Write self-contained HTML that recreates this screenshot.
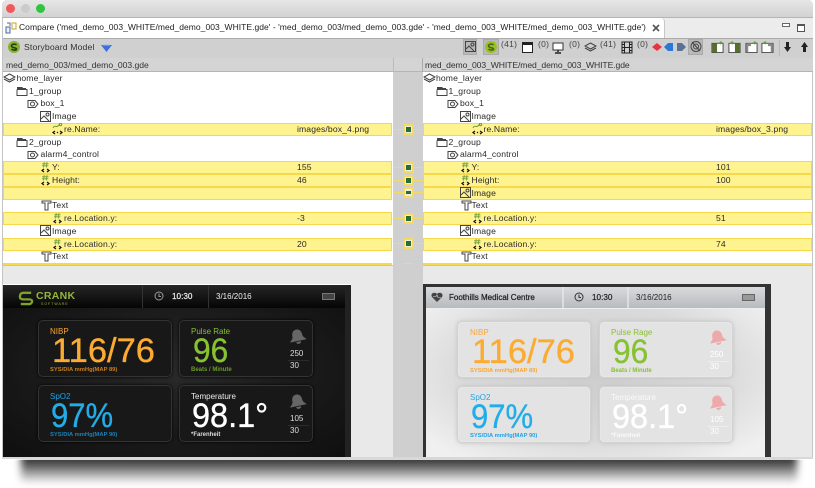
<!DOCTYPE html>
<html><head><meta charset="utf-8"><style>
html,body{margin:0;padding:0;background:#fff}
#p{position:relative;width:815px;height:488px;overflow:hidden;background:#fff;font-family:"Liberation Sans",sans-serif;color:#222;filter:blur(.35px)}
#p div,#p svg{position:absolute}
.t{font-size:8.6px;line-height:13px;height:13px;white-space:nowrap;color:#2a2a2a;letter-spacing:.12px}
.y{height:11px;background:#fff38f;border:1px solid #f5d94a;box-sizing:content-box}
.b{width:7px;height:7px;background:#e8f0e0;border:2px solid #f3d968}
.b i{position:absolute;left:1px;top:1px;width:5px;height:5px;background:#2d6b35;display:block}
.l{width:10px;height:1px;background:#f3d968}
.c{font-size:8.500px;color:#444;white-space:nowrap;line-height:10px;letter-spacing:.3px}
.s{fill:none;stroke:#444;stroke-width:1}
.d{white-space:nowrap}
.n{-webkit-text-stroke:.35px currentColor;transform-origin:0 0}
.cd{width:132px;height:55px;border-radius:5px}
.dk{background:#181818;border:1px solid #333;box-shadow:0 0 3px #000}
.lt{background:#e3e3e3;border:1px solid #d2d2d2;box-shadow:0 0 4px #c4c4c4,inset 0 0 1px #fff}
.bl{transform:rotate(-12deg)}
</style></head><body><div id="p">
<svg width="0" height="0" style="position:absolute"><defs>
<symbol id="lay" viewBox="0 0 13 11"><path class="s" d="M6.500 1L12 4 6.500 7 1 4zM1 6l5.500 3L12 6"/></symbol>
<symbol id="fol" viewBox="0 0 12 11"><path class="s" d="M1 3.500V9.500H11V3.500H1M1.500 3V1.500H6L7 3"/><path d="M1 2h9v1.500H1z" fill="#444"/></symbol>
<symbol id="ctl" viewBox="0 0 12 10"><path class="s" d="M1 1.500H8L11 5 8 8.500H1z"/><circle class="s" cx="5.500" cy="5" r="2"/></symbol>
<symbol id="img" viewBox="0 0 11 11"><path class="s" d="M.500.500h10v10H.500z"/><path class="s" d="M1 8l3-3 5 5"/><circle class="s" cx="7.500" cy="3.500" r="1.500"/></symbol>
<symbol id="txt" viewBox="0 0 11 11"><path class="s" d="M1 3V1H10V3H7V10H4V3z"/></symbol>
<symbol id="at1" viewBox="0 0 11 12"><path d="M1 5C3 1 4 5 6 3L8 1" fill="none" stroke="#6a9a3a"/><circle cx="8.500" cy="1.500" r="1.200" fill="none" stroke="#6a9a3a"/><path d="M3 8L1 9.500 3 11M8 8l2 1.500L8 11" fill="none" stroke="#111" stroke-width="1.200"/><circle cx="5.500" cy="9.500" r=".7" fill="#111"/></symbol>
<symbol id="at2" viewBox="0 0 9 12"><path d="M3.200 1L2.500 6.500M6 1L5.300 6.500M1.200 2.800H7.500M1 4.800H7.300" fill="none" stroke="#6a9a3a" stroke-width=".8"/><path d="M3 8L1 9.500 3 11M6 8l2 1.500L6 11" fill="none" stroke="#111" stroke-width="1.200"/></symbol>
<symbol id="bell" viewBox="0 0 17 15"><path d="M8.500 0.500C4.500 0.500 3.500 4 3.500 6.500 3.500 9 1.500 10 0 12H17C15.500 10 13.500 9 13.500 6.500 13.500 4 12.500 0.500 8.500 0.500z"/><path d="M6 12.800a2.500 2.200 0 0 0 5 0z"/></symbol>
<symbol id="tb1" viewBox="0 0 14 14"><path d="M1 3h12v10H1z" fill="#fff" stroke="#444"/><path d="M1.500 3h5v10h-5z" fill="#56702c"/><path d="M8 2.500h3.500M10 1l2 1.500-2 1.500" fill="none" stroke="#5e9a3a"/></symbol>
<symbol id="tb2" viewBox="0 0 14 14"><path d="M1 3h12v10H1z" fill="#fff" stroke="#444"/><path d="M7.500 3h5v10h-5z" fill="#56702c"/><path d="M3 2.500h3.500M5 1l-2 1.500 2 1.500" fill="none" stroke="#5e9a3a"/></symbol>
<symbol id="tb3" viewBox="0 0 14 14"><path d="M1 3h12v10H1z" fill="#fff" stroke="#444"/><path d="M1.500 3h2v10h-2zM1.500 3h5v3h-5z" fill="#8a8a8a"/><path d="M8 2.500h3.500M10 1l2 1.500-2 1.500" fill="none" stroke="#5e9a3a"/></symbol>
<symbol id="tb4" viewBox="0 0 14 14"><path d="M1 3h12v10H1z" fill="#fff" stroke="#444"/><path d="M10.500 3h2v10h-2zM7.500 3h5v3h-5z" fill="#8a8a8a"/><path d="M3 2.500h3.500M5 1l-2 1.500 2 1.500" fill="none" stroke="#5e9a3a"/></symbol>
</defs></svg>

<!-- shadow -->
<div style="left:21px;top:452px;width:776px;height:32px;background:linear-gradient(#333 0,#333 25%,#888 56%,#ccc 81%,rgba(255,255,255,0) 100%);filter:blur(4px)"></div>
<div style="left:2px;top:0;width:811px;height:458px;background:#e9e9e9;border:1px solid #c4c4c4;box-sizing:border-box;border-radius:5px 5px 0 0"></div>
<div style="left:0;top:459px;width:815px;height:1px;background:#fff;opacity:.8"></div>
<!-- title bar -->
<div style="left:2px;top:0;width:811px;height:17px;background:linear-gradient(#e6e6e6,#d2d2d2);border-bottom:1px solid #b4b4b4;border-radius:5px 5px 0 0"></div>
<div style="left:6px;top:4px;width:9px;height:9px;border-radius:50%;background:#f0585a"></div>
<div style="left:21px;top:4px;width:9px;height:9px;border-radius:50%;background:#cbcbcb"></div>
<div style="left:36px;top:4px;width:9px;height:9px;border-radius:50%;background:#2fc53f"></div>
<!-- tab row -->
<div style="left:3px;top:18px;width:810px;height:20px;background:#ececec"></div>
<div style="left:3px;top:18px;width:661px;height:20px;background:#fff;border-right:1px solid #c6c6c6;border-radius:0 4px 0 0"></div>
<svg style="left:5px;top:22px" width="12" height="12" viewBox="0 0 12 12"><path d="M1 5h4v6H1z" fill="#eef" stroke="#4a6a9a"/><path d="M2 1h3v3" fill="none" stroke="#4a6a9a"/><path d="M7 1h4v6H7z" fill="#fff" stroke="#c9a520"/></svg>
<div class="t" style="left:19px;top:21px;font-size:8.500px;letter-spacing:.04px;color:#222">Compare ('med_demo_003_WHITE/med_demo_003_WHITE.gde' - 'med_demo_003/med_demo_003.gde' - 'med_demo_003_WHITE/med_demo_003_WHITE.gde')</div>
<svg style="left:652px;top:24px" width="8" height="8" viewBox="0 0 8 8"><path d="M1 1l6 6M7 1L1 7" stroke="#555" stroke-width="1.600" fill="none"/></svg>
<div style="left:782px;top:23px;width:6px;height:2px;border:1px solid #666;background:#fff"></div>
<div style="left:797px;top:24px;width:6px;height:5px;border:1px solid #555;border-top-width:2px;background:#fff"></div>
<!-- toolbar -->
<div style="left:3px;top:38px;width:810px;height:20px;background:#d0d0d0;border-top:1px solid #aaa;box-sizing:border-box"></div>
<svg style="left:8px;top:41px" width="12" height="12" viewBox="0 0 12 12"><circle cx="6" cy="6" r="6" fill="#8ab02c"/><path d="M8.500 4C7 2.500 3.500 3 3.500 5S8.500 6.500 8.500 8 5 9.500 3.500 8" fill="none" stroke="#1f3b14" stroke-width="1.500"/></svg>
<div class="t" style="left:24px;top:41px;font-size:8.700px;color:#333">Storyboard Model</div>
<svg style="left:101px;top:44px" width="11" height="8" viewBox="0 0 11 8"><path d="M0 1h11L5.500 8z" fill="#3f6fd8"/><path d="M2 1h7" stroke="#9db8ee"/></svg>

<div style="left:463px;top:39px;width:14px;height:16px;background:#b9b9b9;border:1px solid #aaa;box-sizing:border-box"></div>
<svg style="left:465px;top:41px" width="11" height="11"><use href="#img"/></svg>
<div style="left:483px;top:39px;width:16px;height:16px;background:#b9b9b9;border:1px solid #aaa;box-sizing:border-box"></div>
<svg style="left:485px;top:41px" width="12" height="12" viewBox="0 0 12 12"><circle cx="6" cy="6" r="6" fill="#97c11f"/><path d="M8.500 4C7 2.500 3.500 3 3.500 5S8.500 6.500 8.500 8 5 9.500 3.500 8" fill="none" stroke="#47621a" stroke-width="1.500"/></svg>
<div class="c" style="left:501px;top:39px">(41)</div>
<svg style="left:522px;top:42px" width="11" height="11" viewBox="0 0 11 11"><path d="M.500.500h10v10H.500z" fill="#fff" stroke="#222"/><path d="M1 1h9v2H1z" fill="#222"/></svg>
<div class="c" style="left:538px;top:39px">(0)</div>
<svg style="left:552px;top:42px" width="12" height="12" viewBox="0 0 12 12"><path d="M1 1h10v7H1z" fill="#fff" stroke="#333"/><path d="M6 8v2M3 11h6" stroke="#222" stroke-width="1.500"/></svg>
<div class="c" style="left:569px;top:39px">(0)</div>
<svg style="left:584px;top:42px" width="13" height="11"><use href="#lay"/></svg>
<div class="c" style="left:600px;top:39px">(41)</div>
<svg style="left:621px;top:41px" width="12" height="13" viewBox="0 0 12 13"><path d="M1 1h10v11H1zM3.500 1v11M8.500 1v11M1 6.500h10M1 3.500h2.500M1 9.500h2.500M8.500 3.500H11M8.500 9.500H11" fill="none" stroke="#222"/></svg>
<div class="c" style="left:637px;top:39px">(0)</div>
<svg style="left:652px;top:43px" width="10" height="8" viewBox="0 0 10 8"><path d="M0 4L5 0l5 4-5 4z" fill="#ea3340"/></svg>
<svg style="left:664px;top:43px" width="9" height="8" viewBox="0 0 9 8"><path d="M0 4L4 0h5v8H4z" fill="#2a78d8"/></svg>
<svg style="left:677px;top:43px" width="9" height="8" viewBox="0 0 9 8"><path d="M9 4L5 0H0v8h5z" fill="#5b7294"/></svg>
<div style="left:688px;top:39px;width:15px;height:16px;background:#b9b9b9;border:1px solid #aaa;box-sizing:border-box"></div>
<svg style="left:690px;top:40px" width="12" height="13" viewBox="0 0 12 13"><circle class="s" cx="6" cy="6.500" r="5"/><circle class="s" cx="6" cy="6.500" r="2.500"/><path class="s" d="M2 2l8 9"/></svg>
<svg style="left:711px;top:40px" width="13" height="14"><use href="#tb1"/></svg>
<svg style="left:728px;top:40px" width="13" height="14"><use href="#tb2"/></svg>
<svg style="left:745px;top:40px" width="13" height="14"><use href="#tb3"/></svg>
<svg style="left:761px;top:40px" width="13" height="14"><use href="#tb4"/></svg>
<div style="left:779px;top:40px;width:1px;height:16px;background:#bbb"></div>
<svg style="left:784px;top:42px" width="7" height="10" viewBox="0 0 7 10"><path d="M2 0h3v5h2L3.500 10 0 5h2z" fill="#222"/></svg>
<svg style="left:801px;top:42px" width="7" height="10" viewBox="0 0 7 10"><path d="M2 10h3V5h2L3.500 0 0 5h2z" fill="#222"/></svg>

<!-- headers -->
<div style="left:3px;top:58px;width:810px;height:14px;background:#d4d4d4;border-bottom:1px solid #b5b5b5;box-sizing:border-box"></div>
<div style="left:393px;top:58px;width:1px;height:14px;background:#bbb"></div>
<div style="left:422px;top:58px;width:1px;height:14px;background:#aaa"></div>
<div class="t" style="left:6px;top:59px;color:#333;letter-spacing:-.02px">med_demo_003/med_demo_003.gde</div>
<div class="t" style="left:425px;top:59px;color:#333;letter-spacing:-.09px">med_demo_003_WHITE/med_demo_003_WHITE.gde</div>

<!-- panes -->
<div style="left:3px;top:72px;width:390px;height:193px;background:#fff"></div>
<div style="left:423px;top:72px;width:389px;height:193px;background:#fff"></div>
<div style="left:393px;top:72px;width:30px;height:386px;background:#cfcfcf"></div>
<div style="left:3px;top:265px;width:390px;height:1px;background:#c4c4c4"></div>
<div style="left:423px;top:265px;width:389px;height:1px;background:#c4c4c4"></div>

<!-- yellow rows -->
<div class="y" style="left:3px;top:123px;width:387px"></div>
<div class="y" style="left:3px;top:161px;width:387px"></div>
<div class="y" style="left:3px;top:174px;width:387px"></div>
<div class="y" style="left:3px;top:186.500px;width:387px"></div>
<div class="y" style="left:3px;top:212px;width:387px"></div>
<div class="y" style="left:3px;top:237.500px;width:387px"></div>
<div style="left:3px;top:263px;width:389px;height:2px;background:#f5d94a"></div>
<div class="y" style="left:423px;top:123px;width:387px"></div>
<div class="y" style="left:423px;top:161px;width:387px"></div>
<div class="y" style="left:423px;top:174px;width:387px"></div>
<div class="y" style="left:423px;top:186.500px;width:387px"></div>
<div class="y" style="left:423px;top:212px;width:387px"></div>
<div class="y" style="left:423px;top:237.500px;width:387px"></div>
<div style="left:423px;top:263px;width:389px;height:2px;background:#f5d94a"></div>

<!-- connectors -->
<div class="l" style="left:393px;top:129px;width:30px"></div><div class="b" style="left:403px;top:124px"><i></i></div>
<div class="l" style="left:393px;top:167px;width:30px"></div><div class="b" style="left:403px;top:162px"><i></i></div>
<div class="l" style="left:393px;top:180px;width:30px"></div><div class="b" style="left:403px;top:175px"><i></i></div>
<div class="l" style="left:393px;top:192px;width:30px"></div><div class="b" style="left:403px;top:187px"><i style="top:2px;height:3px"></i></div>
<div class="l" style="left:393px;top:218px;width:30px"></div><div class="b" style="left:403px;top:213px"><i></i></div>
<div class="l" style="left:393px;top:243px;width:30px"></div><div class="b" style="left:403px;top:238px"><i></i></div>
<div class="l" style="left:403px;top:263px"></div>

<!-- left tree -->
<svg style="left:3px;top:73px" width="13" height="11"><use href="#lay"/></svg><div class="t" style="left:16.500px;top:72px">home_layer</div>
<svg style="left:16px;top:86px" width="12" height="11"><use href="#fol"/></svg><div class="t" style="left:29px;top:85px">1_group</div>
<svg style="left:27px;top:99px" width="12" height="10"><use href="#ctl"/></svg><div class="t" style="left:40.500px;top:97px">box_1</div>
<svg style="left:40px;top:111px" width="11" height="11"><use href="#img"/></svg><div class="t" style="left:52px;top:110px">Image</div>
<svg style="left:52px;top:123px" width="11" height="12"><use href="#at1"/></svg><div class="t" style="left:64px;top:123px">re.Name:</div><div class="t" style="left:297px;top:123px">images/box_4.png</div>
<svg style="left:16px;top:137px" width="12" height="11"><use href="#fol"/></svg><div class="t" style="left:29px;top:136px">2_group</div>
<svg style="left:27px;top:150px" width="12" height="10"><use href="#ctl"/></svg><div class="t" style="left:40.500px;top:148px">alarm4_control</div>
<svg style="left:41px;top:161px" width="9" height="12"><use href="#at2"/></svg><div class="t" style="left:52px;top:161px">Y:</div><div class="t" style="left:297px;top:161px">155</div>
<svg style="left:41px;top:174px" width="9" height="12"><use href="#at2"/></svg><div class="t" style="left:52px;top:174px">Height:</div><div class="t" style="left:297px;top:174px">46</div>
<svg style="left:41px;top:200px" width="11" height="11"><use href="#txt"/></svg><div class="t" style="left:52px;top:199px">Text</div>
<svg style="left:53px;top:212px" width="9" height="12"><use href="#at2"/></svg><div class="t" style="left:64px;top:212px">re.Location.y:</div><div class="t" style="left:297px;top:212px">-3</div>
<svg style="left:40px;top:225px" width="11" height="11"><use href="#img"/></svg><div class="t" style="left:52px;top:224.500px">Image</div>
<svg style="left:53px;top:238px" width="9" height="12"><use href="#at2"/></svg><div class="t" style="left:64px;top:237.500px">re.Location.y:</div><div class="t" style="left:297px;top:237.500px">20</div>
<svg style="left:41px;top:251px" width="11" height="11"><use href="#txt"/></svg><div class="t" style="left:52px;top:250px">Text</div>

<!-- right tree -->
<svg style="left:422.500px;top:73px" width="13" height="11"><use href="#lay"/></svg><div class="t" style="left:436px;top:72px">home_layer</div>
<svg style="left:435.500px;top:86px" width="12" height="11"><use href="#fol"/></svg><div class="t" style="left:448.500px;top:85px">1_group</div>
<svg style="left:446.500px;top:99px" width="12" height="10"><use href="#ctl"/></svg><div class="t" style="left:460px;top:97px">box_1</div>
<svg style="left:459.500px;top:111px" width="11" height="11"><use href="#img"/></svg><div class="t" style="left:471.500px;top:110px">Image</div>
<svg style="left:471.500px;top:123px" width="11" height="12"><use href="#at1"/></svg><div class="t" style="left:483.500px;top:123px">re.Name:</div><div class="t" style="left:716px;top:123px">images/box_3.png</div>
<svg style="left:435.500px;top:137px" width="12" height="11"><use href="#fol"/></svg><div class="t" style="left:448.500px;top:136px">2_group</div>
<svg style="left:446.500px;top:150px" width="12" height="10"><use href="#ctl"/></svg><div class="t" style="left:460px;top:148px">alarm4_control</div>
<svg style="left:460.500px;top:161px" width="9" height="12"><use href="#at2"/></svg><div class="t" style="left:471.500px;top:161px">Y:</div><div class="t" style="left:716px;top:161px">101</div>
<svg style="left:460.500px;top:174px" width="9" height="12"><use href="#at2"/></svg><div class="t" style="left:471.500px;top:174px">Height:</div><div class="t" style="left:716px;top:174px">100</div>
<svg style="left:459.500px;top:187px" width="11" height="11"><use href="#img"/></svg><div class="t" style="left:471.500px;top:186.500px">Image</div>
<svg style="left:460.500px;top:200px" width="11" height="11"><use href="#txt"/></svg><div class="t" style="left:471.500px;top:199px">Text</div>
<svg style="left:472.500px;top:212px" width="9" height="12"><use href="#at2"/></svg><div class="t" style="left:483.500px;top:212px">re.Location.y:</div><div class="t" style="left:716px;top:212px">51</div>
<svg style="left:459.500px;top:225px" width="11" height="11"><use href="#img"/></svg><div class="t" style="left:471.500px;top:224.500px">Image</div>
<svg style="left:472.500px;top:238px" width="9" height="12"><use href="#at2"/></svg><div class="t" style="left:483.500px;top:237.500px">re.Location.y:</div><div class="t" style="left:716px;top:237.500px">74</div>
<svg style="left:460.500px;top:251px" width="11" height="11"><use href="#txt"/></svg><div class="t" style="left:471.500px;top:250px">Text</div>

<!-- left dashboard -->
<div style="left:3px;top:284px;width:348px;height:174px;background:radial-gradient(ellipse at center,#2a2a2a 0,#1a1a1a 55%,#0e0e0e 100%);overflow:hidden"></div>
<div style="left:3px;top:284px;width:348px;height:1px;background:#fff"></div>
<div style="left:3px;top:285px;width:342px;height:23px;background:linear-gradient(#262626,#050505)"></div>
<div style="left:142px;top:285px;width:1px;height:23px;background:#333"></div>
<div style="left:208px;top:285px;width:1px;height:23px;background:#333"></div>
<div style="left:345px;top:285px;width:6px;height:173px;background:#222"></div>
<svg style="left:18px;top:289px" width="16" height="17" viewBox="0 0 17 18"><path d="M14 4H6C3 4 2 6 2 8s1 3 4 3h6c2 0 3 1 3 2s-1 3-3 3H3" fill="none" stroke="#7fa22c" stroke-width="2.500"/></svg>
<div class="d" style="left:36px;top:290px;font-size:10.500px;line-height:12px;font-weight:bold;color:#93b53a;letter-spacing:.3px">CRANK</div>
<div class="d" style="left:41px;top:302px;font-size:3.500px;line-height:4px;color:#93b53a;letter-spacing:1px">SOFTWARE</div>
<svg style="left:154px;top:291px" width="10" height="10" viewBox="0 0 10 10"><circle cx="5" cy="5" r="4" fill="none" stroke="#999"/><path d="M5 2.500V5.500H7" fill="none" stroke="#999"/></svg>
<div class="d n" style="left:172px;top:291px;font-size:8.200px;line-height:11px;color:#eee;-webkit-text-stroke-width:.2px">10:30</div>
<div class="d" style="left:216px;top:291px;font-size:8px;line-height:11px;color:#eee">3/16/2016</div>
<div style="left:322px;top:293px;width:11px;height:5px;border:1px solid #777;background:#444"></div>

<div class="cd dk" style="left:38px;top:320px"></div>
<div class="cd dk" style="left:179px;top:320px"></div>
<div class="cd dk" style="left:38px;top:385px"></div>
<div class="cd dk" style="left:179px;top:385px"></div>

<div class="d" style="left:50px;top:326px;font-size:8px;line-height:11px;color:#f9a634">NIBP</div>
<div class="d n" style="left:52px;top:331px;font-size:34.500px;line-height:40px;color:#fbab32">116/76</div>
<div class="d" style="left:50px;top:366px;font-size:5.800px;line-height:9px;color:#c97f20;font-weight:bold">SYS/DIA mmHg(MAP 89)</div>
<div class="d" style="left:191px;top:326px;font-size:8px;line-height:11px;color:#88c034">Pulse Rate</div>
<div class="d n" style="left:193px;top:331px;font-size:34.500px;line-height:40px;color:#86c232;transform:scaleX(.92)">96</div>
<div class="d" style="left:191px;top:366px;font-size:6px;line-height:9px;color:#6c9a28;font-weight:bold">Beats / Minute</div>
<svg class="bl" style="left:289px;top:329px;fill:#666" width="17" height="15"><use href="#bell"/></svg>
<div class="d" style="left:290px;top:349px;font-size:8px;line-height:10px;color:#ddd">250</div>
<div style="left:288px;top:360px;width:21px;height:1px;background:#2c2c2c"></div>
<div class="d" style="left:290px;top:361px;font-size:8px;line-height:10px;color:#ddd">30</div>

<div class="d" style="left:50px;top:391px;font-size:8px;line-height:11px;color:#23a3e3">SpO2</div>
<div class="d n" style="left:51px;top:396px;font-size:34.500px;line-height:40px;color:#22ade9;transform:scaleX(.9)">97%</div>
<div class="d" style="left:50px;top:431px;font-size:5.800px;line-height:9px;color:#1b82b8;font-weight:bold">SYS/DIA mmHg(MAP 90)</div>
<div class="d" style="left:191px;top:391px;font-size:8px;line-height:11px;color:#eee">Temperature</div>
<div class="d n" style="left:192px;top:396px;font-size:34.500px;line-height:40px;color:#fff;transform:scaleX(.94)">98.1°</div>
<div class="d" style="left:191px;top:431px;font-size:6px;line-height:9px;color:#ddd;font-weight:bold">*Farenheit</div>
<svg class="bl" style="left:289px;top:394px;fill:#666" width="17" height="15"><use href="#bell"/></svg>
<div class="d" style="left:290px;top:414px;font-size:8px;line-height:10px;color:#ddd">105</div>
<div style="left:288px;top:425px;width:21px;height:1px;background:#2c2c2c"></div>
<div class="d" style="left:290px;top:426px;font-size:8px;line-height:10px;color:#ddd">30</div>

<!-- right dashboard -->
<div style="left:423px;top:284px;width:348px;height:174px;background:#333"></div>
<div style="left:426px;top:287px;width:339px;height:171px;background:radial-gradient(ellipse at center,#cdcdcd 0,#dadada 55%,#f0f0f0 90%)"></div>
<div style="left:426px;top:287px;width:136px;height:21px;background:linear-gradient(#d8dadc,#b8bbbe)"></div>
<div style="left:564px;top:287px;width:63px;height:21px;background:linear-gradient(#d8dadc,#b8bbbe)"></div>
<div style="left:629px;top:287px;width:136px;height:21px;background:linear-gradient(#d8dadc,#b8bbbe)"></div>
<div style="left:426px;top:308px;width:339px;height:1px;background:#eee"></div>
<svg style="left:431px;top:292px" width="12" height="10" viewBox="0 0 12 10"><path d="M6 10L1 5C-1 2 3-1 6 2c3-3 7 0 5 3z" fill="#444"/><path d="M2 4.500h3l1-1.500 1 2.500h3" stroke="#ddd" stroke-width=".6" fill="none"/></svg>
<div class="d n" style="left:449px;top:292px;font-size:8px;line-height:12px;color:#222;-webkit-text-stroke-width:.25px">Foothills Medical Centre</div>
<svg style="left:574px;top:292px" width="10" height="10" viewBox="0 0 10 10"><circle cx="5" cy="5" r="4" fill="none" stroke="#333"/><path d="M5 2.500V5.500H7" fill="none" stroke="#333"/></svg>
<div class="d n" style="left:592px;top:292px;font-size:8.200px;line-height:11px;color:#222;-webkit-text-stroke-width:.2px">10:30</div>
<div class="d" style="left:636px;top:292px;font-size:8px;line-height:11px;color:#222">3/16/2016</div>
<div style="left:742px;top:293.500px;width:11px;height:5px;border:1px solid #666;background:#999"></div>

<div class="cd lt" style="left:457px;top:321px"></div>
<div class="cd lt" style="left:599px;top:321px"></div>
<div class="cd lt" style="left:457px;top:386px"></div>
<div class="cd lt" style="left:599px;top:386px"></div>

<div class="d" style="left:470px;top:327px;font-size:8px;line-height:11px;color:#f9a634">NIBP</div>
<div class="d n" style="left:472px;top:332px;font-size:34.500px;line-height:40px;color:#fbab32">116/76</div>
<div class="d" style="left:470px;top:367px;font-size:5.800px;line-height:9px;color:#f9a634;font-weight:bold">SYS/DIA mmHg(MAP 89)</div>
<div class="d" style="left:611px;top:327px;font-size:8px;line-height:11px;color:#88c034">Pulse Rage</div>
<div class="d n" style="left:613px;top:332px;font-size:34.500px;line-height:40px;color:#86c232;transform:scaleX(.92)">96</div>
<div class="d" style="left:611px;top:367px;font-size:6px;line-height:9px;color:#88c034;font-weight:bold">Beats / Minute</div>
<svg class="bl" style="left:709px;top:330px;fill:#eeaaaa" width="17" height="15"><use href="#bell"/></svg>
<div class="d" style="left:710px;top:350px;font-size:8px;line-height:10px;color:#fff">250</div>
<div style="left:708px;top:361px;width:21px;height:1px;background:#eee"></div>
<div class="d" style="left:710px;top:362px;font-size:8px;line-height:10px;color:#fff">30</div>

<div class="d" style="left:470px;top:392px;font-size:8px;line-height:11px;color:#23a3e3">SpO2</div>
<div class="d n" style="left:471px;top:397px;font-size:34.500px;line-height:40px;color:#22ade9;transform:scaleX(.9)">97%</div>
<div class="d" style="left:470px;top:432px;font-size:5.800px;line-height:9px;color:#23a3e3;font-weight:bold">SYS/DIA mmHg(MAP 90)</div>
<div class="d" style="left:611px;top:392px;font-size:8px;line-height:11px;color:#fafafa">Temperature</div>
<div class="d n" style="left:612px;top:397px;font-size:34.500px;line-height:40px;color:#fff;transform:scaleX(.94)">98.1°</div>
<div class="d" style="left:611px;top:432px;font-size:6px;line-height:9px;color:#fafafa;font-weight:bold">*Farenheit</div>
<svg class="bl" style="left:709px;top:395px;fill:#eeaaaa" width="17" height="15"><use href="#bell"/></svg>
<div class="d" style="left:710px;top:415px;font-size:8px;line-height:10px;color:#fff">105</div>
<div style="left:708px;top:426px;width:21px;height:1px;background:#eee"></div>
<div class="d" style="left:710px;top:427px;font-size:8px;line-height:10px;color:#fff">30</div>

<!-- window bottom edge -->
<div style="left:2px;top:457px;width:811px;height:2px;background:#d8d8d8"></div>
</div></body></html>
